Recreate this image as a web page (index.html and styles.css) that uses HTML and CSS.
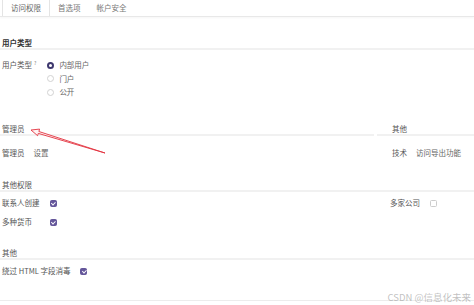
FILE: index.html
```html
<!DOCTYPE html>
<html>
  <head>
    <title>用户权限</title>
    <link rel="stylesheet" href="styles.css">
  </head>
  <body>
    <div class="tabs">
      <div class="tab active">访问权限</div>
      <div class="tab">首选项</div>
      <div class="tab">帐户安全</div>
    </div>

    <div class="sheet">
      <div class="group group-first">
        <div class="group-title strong">用户类型</div>
        <div class="fields">
          <div class="label">用户类型<sup>?</sup></div>
          <div class="radio-list">
            <div class="radio-item"><span class="radio checked"></span>内部用户</div>
            <div class="radio-item"><span class="radio"></span>门户</div>
            <div class="radio-item"><span class="radio"></span>公开</div>
          </div>
        </div>
      </div>

      <div class="split">
        <div class="group">
          <div class="group-title">管理员</div>
          <div class="fields select-row">
            <div class="label">管理员</div>
            <div class="value">设置</div>
          </div>
        </div>
        <div class="group side">
          <div class="group-title">其他</div>
          <div class="fields select-row">
            <div class="label">技术</div>
            <div class="value">访问导出功能</div>
          </div>
        </div>
      </div>

      <div class="group">
        <div class="group-title">其他权限</div>
        <div class="split split-plain">
          <div class="fields">
            <div class="label">联系人创建</div>
            <div><span class="check on"></span></div>
            <div class="label">多种货币</div>
            <div><span class="check on"></span></div>
          </div>
          <div class="fields side">
            <div class="label">多家公司</div>
            <div><span class="check"></span></div>
          </div>
        </div>
      </div>

      <div class="group">
        <div class="group-title">其他</div>
        <div class="fields">
          <div class="label">绕过 HTML 字段消毒</div>
          <div><span class="check on"></span></div>
        </div>
      </div>

      <div class="footer-line"></div>
    </div>

    <svg class="arrow" width="474" height="305" viewBox="0 0 474 305">
      <polygon points="31,130 37.6,135.7 38.3,133.4 105,153 38.9,131.5 39.6,129.1"
        fill="#fff5f5" stroke="#e2323e" stroke-width="0.9" stroke-linejoin="round"/>
    </svg>

    <div class="watermark">CSDN @信息化未来</div>
  </body>
</html>
```

FILE: styles.css
```css
body {
  margin: 0;
  font-family: "Noto Sans CJK SC", "Noto Sans", sans-serif;
  font-size: 7.5px;
  color: #666;
  background-color: #fff;
}

.tabs {
  display: flex;
  height: 16px;
  border-bottom: 1px solid #e8e8e8;
  box-shadow: 0 1px 2px rgba(0, 0, 0, 0.04);
}

.tab {
  padding: 0 8px;
  line-height: 15px;
  color: #777;
}

.tab.active {
  margin-left: 2px;
  height: 16px;
  border: 1px solid #e4e4e4;
  border-top: none;
  border-bottom: none;
  background-color: #fff;
  color: #666;
}

.group {
  margin-top: 21px;
}

.group-title {
  padding-left: 2px;
  line-height: 10px;
  color: #555;
  border-bottom: 2px solid #f1f1f1;
  margin-bottom: 6px;
}

.group-title.strong {
  color: #333;
  font-weight: 600;
}

.fields {
  display: grid;
  grid-template-columns: max-content 1fr;
  column-gap: 9px;
  row-gap: 9px;
  align-items: center;
  align-content: start;
  padding-left: 2px;
  line-height: 10px;
}

.label {
  color: #555;
}

.label sup {
  font-size: 5px;
  line-height: 0;
  margin-left: 2px;
  color: #888;
}

.radio-list {
  display: flex;
  flex-direction: column;
  gap: 3.5px;
  padding-bottom: 6px;
}

.group-first .fields {
  padding-top: 4px;
  align-items: start;
}

.radio-item {
  display: flex;
  align-items: center;
  gap: 5px;
  margin-left: 2px;
}

.radio {
  display: inline-block;
  width: 5px;
  height: 5px;
  border: 1px solid #d2d2d2;
  border-radius: 50%;
  background-color: #fff;
}

.radio.checked {
  width: 3px;
  height: 3px;
  border: 2px solid #3e386e;
}

.check {
  display: block;
  width: 5px;
  height: 5px;
  border: 1px solid #cccccc;
  border-radius: 1.5px;
  margin-left: 1px;
  position: relative;
}

.check.on {
  background-color: #64569a;
  border-color: #64569a;
}

.check.on::after {
  content: "";
  position: absolute;
  left: 1.5px;
  top: 0.5px;
  width: 1.5px;
  height: 2.8px;
  border: solid #fff;
  border-width: 0 1px 1px 0;
  transform: rotate(45deg);
}

.split {
  display: grid;
  grid-template-columns: 374px 1fr;
  column-gap: 3px;
}

.split-plain {
  column-gap: 0;
  grid-template-columns: 375px 1fr;
  align-items: start;
}

.side .group-title,
.side .fields,
.fields.side {
  padding-left: 15px;
}

.select-row {
  padding-top: 6px;
  padding-bottom: 1px;
}

.value {
  color: #666;
}

.footer-line {
  margin-top: 24px;
  border-top: 1px solid #ececec;
}

.arrow {
  position: absolute;
  left: 0;
  top: 0;
  pointer-events: none;
}

.watermark {
  position: absolute;
  right: 3px;
  bottom: 1px;
  font-size: 9.5px;
  color: rgba(140, 140, 140, 0.55);
}
```
